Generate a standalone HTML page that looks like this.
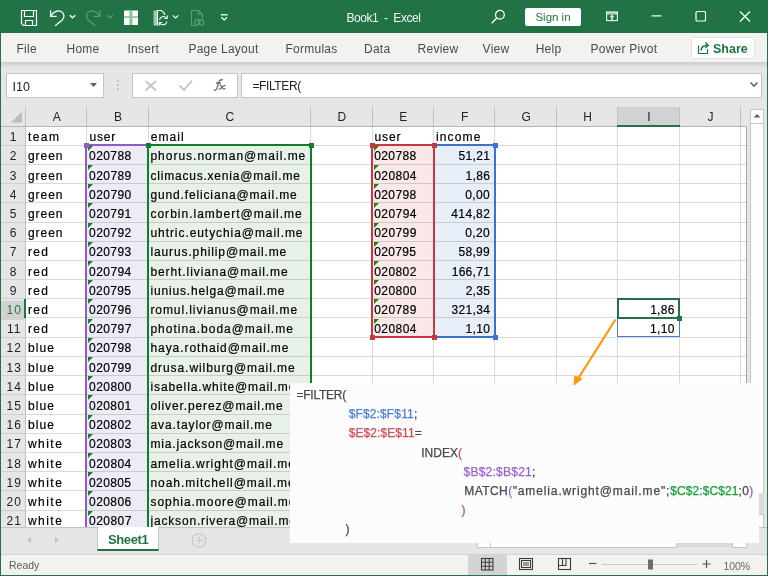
<!DOCTYPE html><html><head><meta charset="utf-8"><style>
*{margin:0;padding:0;box-sizing:border-box}
html,body{width:768px;height:576px;overflow:hidden;background:#fff}
body{position:relative;font-family:"Liberation Sans",sans-serif;color:#000}
.t{-webkit-text-stroke:0.2px #000}
.a{position:absolute}
.t{position:absolute;white-space:nowrap;font-size:12px;line-height:19.2px;height:19.2px}
.tx{letter-spacing:1.0px}
.hl{position:absolute;height:1px;background:#dadada}
.vl{position:absolute;width:1px;background:#dadada}
.tab{position:absolute;font-size:12px;color:#4a4a4a;letter-spacing:0.25px;line-height:20px;white-space:nowrap}
.ch{position:absolute;top:107px;height:19px;font-size:12px;line-height:20px;text-align:center;color:#222}
.rh{position:absolute;left:1px;width:24px;font-size:12px;line-height:19.2px;height:19.2px;text-align:center;color:#222}
.tri{position:absolute;width:0;height:0;border-top:5px solid #0d8a0d;border-right:5px solid transparent}
.rf{letter-spacing:0.2px}
.fl{-webkit-text-stroke:0.25px currentColor;position:absolute;font-size:12px;line-height:19.2px;white-space:nowrap;color:#484848;letter-spacing:0.72px}
</style></head><body>
<div class="a" style="left:0;top:0;width:768px;height:33px;background:#217346"></div>
<div class="a" style="left:0;top:0;width:1px;height:576px;background:#217346;z-index:50"></div>
<div class="a" style="left:767px;top:0;width:1px;height:576px;background:#217346;z-index:50"></div>
<div class="a" style="left:0;top:575px;width:768px;height:1px;background:#217346;z-index:50"></div>
<svg class="a" style="left:0;top:0" width="240" height="33" viewBox="0 0 240 33">
<g fill="none" stroke="#fff" stroke-width="1.2">
<path d="M21.5 10.5H36.5V25.5H23.5L21.5 23.5Z"/>
<path d="M24.5 10.5V16.5H33.5V10.5"/>
<path d="M25.5 25.5V20.5H32.5V25.5"/>
</g>
<g fill="none" stroke="#fff" stroke-width="1.3">
<path d="M50.6 10.3V16.4H56.6"/>
<path d="M51.2 15.8C53.5 11.5 58 9.8 61.2 11.5C64.5 13.3 64.8 17.5 62 20.2L55.2 25.8"/>
<path d="M69.8 15.2l2.7 2.6 2.7-2.6"/>
</g>
<g fill="none" stroke="#5d9b76" stroke-width="1.3">
<path d="M99.9 10.3V16.4H93.9"/>
<path d="M99.3 15.8C97 11.5 92.5 9.8 89.3 11.5C86 13.3 85.7 17.5 88.5 20.2L95.3 25.8"/>
<path d="M107.6 15.2l2.7 2.6 2.7-2.6"/>
</g>
<rect x="124" y="10.5" width="14" height="14.5" fill="#fff"/>
<rect x="129.3" y="10.5" width="3.2" height="14.5" fill="#8fc2a3"/>
<rect x="124" y="16.3" width="14" height="1.8" fill="#6aa985"/>
<path d="M124 17.2h14" stroke="#d8eadf" stroke-width="0.7"/>
<rect x="153.5" y="10.5" width="3.6" height="15" fill="#9fc9b0"/>
<g fill="none" stroke="#fff" stroke-width="1.1">
<path d="M157.5 25.5V10.5H161.5L164.5 13.5V15"/>
<path d="M159.5 19.8a4 4 0 0 1 7-1.8"/><path d="M167 21.5a4 4 0 0 1-7 1.8"/>
<path d="M167.2 15.5v3h-3M159.3 25.5v-3h3"/>
<path d="M172.8 15.4l2.8 2.6 2.8-2.6"/>
</g>
<g fill="none" stroke="#5d9c77" stroke-width="1.1">
<path d="M196.5 25.5H191.5V10.5H198.5L202.5 14.5V18.5"/><path d="M198.5 10.5V14.5H202.5"/>
<circle cx="197.3" cy="22.3" r="2.7"/><circle cx="201" cy="22.6" r="2.7"/>
</g>
<g fill="none" stroke="#fff" stroke-width="1.3">
<path d="M220.8 14.8h6.8"/><path d="M221.4 17.2l2.8 2.7 2.8-2.7"/>
</g>
</svg>
<div class="a" style="left:346.5px;top:9.6px;font-size:12px;line-height:16px;color:#f2f6f3;white-space:nowrap;letter-spacing:-0.45px">Book1&nbsp; -&nbsp; Excel</div>
<svg class="a" style="left:488px;top:8px" width="20" height="20" viewBox="0 0 20 20"><g fill="none" stroke="#fff" stroke-width="1.3"><circle cx="11.9" cy="6.8" r="4.4"/><path d="M8.8 10L3.7 15.3"/></g></svg>
<div class="a" style="left:525px;top:8px;width:56px;height:18px;background:#fff;border-radius:2px;color:#217346;font-size:11.5px;line-height:19px;text-align:center;letter-spacing:0px">Sign in</div>
<svg class="a" style="left:600px;top:6px" width="24" height="22" viewBox="0 0 24 22"><rect x="6.6" y="6" width="10.8" height="2.8" fill="#9cc6ad"/><g fill="none" stroke="#f0f6f2" stroke-width="1.1"><rect x="6.6" y="6" width="10.8" height="8.6"/></g><path d="M12 8.6L9.6 11.2H11.2V14.6H12.8V11.2H14.4Z" fill="#e6f0ea"/></svg>
<svg class="a" style="left:640px;top:0" width="128" height="33" viewBox="0 0 128 33"><g fill="none" stroke="#fff" stroke-width="1.2">
<path d="M11.5 15.9h10"/>
<rect x="56" y="11.5" width="9.5" height="9.5" rx="1"/>
<path d="M100 11.5l10 10M110 11.5l-10 10"/>
</g></svg>
<div class="a" style="left:1px;top:33px;width:766px;height:29px;background:#f3f2f1"></div>
<div class="tab" style="left:16.5px;top:39px">File</div>
<div class="tab" style="left:66.5px;top:39px">Home</div>
<div class="tab" style="left:127.5px;top:39px">Insert</div>
<div class="tab" style="left:188.4px;top:39px">Page Layout</div>
<div class="tab" style="left:285.5px;top:39px">Formulas</div>
<div class="tab" style="left:364px;top:39px">Data</div>
<div class="tab" style="left:417.6px;top:39px">Review</div>
<div class="tab" style="left:482.6px;top:39px">View</div>
<div class="tab" style="left:535.7px;top:39px">Help</div>
<div class="tab" style="left:590.5px;top:39px">Power Pivot</div>
<div class="a" style="left:691px;top:37px;width:64px;height:22px;background:#fff;border:1px solid #e3e3e3;border-radius:2px"></div>
<svg class="a" style="left:696px;top:40px" width="14" height="16" viewBox="0 0 14 16"><g fill="none" stroke="#217346" stroke-width="1.2"><path d="M2.5 5.5V13.5H11.5V9"/><path d="M5 10.5C5.3 7 7.8 5.2 11.5 5.2" stroke-width="1.6"/><path d="M9.3 2.5L12.3 5.2L9.3 7.9" stroke-width="1.5"/></g></svg>
<div class="a" style="left:713px;top:39px;font-size:12.5px;line-height:20px;color:#217346;font-weight:bold;white-space:nowrap">Share</div>
<div class="a" style="left:1px;top:62px;width:766px;height:45px;background:#e6e6e6"></div>
<div class="a" style="left:1px;top:62px;width:766px;height:6px;background:linear-gradient(#cbcbcb,#d6d6d6 40%,#e6e6e6)"></div>
<div class="a" style="left:6px;top:73px;width:98px;height:25px;background:#fff;border:1px solid #c6c6c6"></div>
<div class="a" style="left:12.5px;top:78.5px;font-size:12.5px;line-height:17px;color:#222">I10</div>
<svg class="a" style="left:90px;top:82.5px" width="7" height="4" viewBox="0 0 7 4"><path d="M0 0h7L3.5 4z" fill="#5f5f5f"/></svg>
<svg class="a" style="left:116px;top:80px" width="4" height="12" viewBox="0 0 4 12"><g fill="#a6a6a6"><rect x="1" y="0.5" width="1.5" height="1.5"/><rect x="1" y="4.5" width="1.5" height="1.5"/><rect x="1" y="8.5" width="1.5" height="1.5"/></g></svg>
<div class="a" style="left:132px;top:73px;width:106px;height:25px;background:#fff;border:1px solid #c6c6c6"></div>
<svg class="a" style="left:140px;top:76px" width="95" height="18" viewBox="0 0 95 18"><g fill="none" stroke="#c4c4c4" stroke-width="1.8" stroke-linecap="round"><path d="M6 5.5l9.5 8.5M15.5 5.5l-9.5 8.5"/><path d="M40 10l4 4 7.5-8.8"/></g></svg>
<svg class="a" style="left:205px;top:72px" width="30" height="24" viewBox="205 72 30 24"><g fill="none" stroke="#6a6a6a" stroke-width="1.3" stroke-linecap="round"><path d="M214.3 90.2C215.6 90.6 216.6 89.6 217.1 87.6L218.9 81.8C219.4 80.2 220.6 79.4 222.4 79.9"/><path d="M216.4 83H220.4"/><path d="M220 85.2C220.8 85 221.3 85.4 221.8 86.5L222.6 88.2C223 89 223.8 89.2 224.9 88.6"/><path d="M225 85.3C223.5 85.6 222.2 86.8 220.8 88.3C220.2 89 219.6 89.2 219.2 88.9"/></g></svg>
<div class="a" style="left:241px;top:73px;width:521px;height:25px;background:#fff;border:1px solid #c6c6c6"></div>
<div class="a" style="left:252.5px;top:77.5px;font-size:12px;line-height:17px;color:#222;letter-spacing:-0.4px">=FILTER(</div>
<svg class="a" style="left:749px;top:81px" width="10" height="8" viewBox="0 0 10 8"><path d="M1.5 1.5l3.5 3.5 3.5-3.5" fill="none" stroke="#666" stroke-width="1.6"/></svg>
<div class="a" style="left:1px;top:107px;width:746px;height:19px;background:#e6e6e6"></div>
<div class="a" style="left:617.78px;top:107px;width:60.940000000000055px;height:19px;background:#d2d2d2"></div>
<div class="a" style="left:617.28px;top:125px;width:62.440000000000055px;height:2px;background:#217346;z-index:3"></div>
<svg class="a" style="left:0;top:107px" width="25" height="19" viewBox="0 0 25 19"><path d="M11 15.5L22 4.5V15.5z" fill="#bdbdbd"/></svg>
<div class="ch" style="left:25.96px;width:61.440000000000005px">A</div>
<div class="ch" style="left:87.4px;width:61.44px">B</div>
<div class="ch" style="left:148.84px;width:162.23999999999998px">C</div>
<div class="ch" style="left:311.08px;width:61.44px">D</div>
<div class="ch" style="left:372.52px;width:61.44px">E</div>
<div class="ch" style="left:433.96px;width:61.44px">F</div>
<div class="ch" style="left:495.4px;width:61.440000000000055px">G</div>
<div class="ch" style="left:556.84px;width:61.43999999999994px">H</div>
<div class="ch" style="left:618.28px;width:61.440000000000055px">I</div>
<div class="ch" style="left:679.72px;width:61.43999999999994px">J</div>
<div class="a" style="left:24.96px;top:107px;width:1px;height:19px;background:#bfbfbf"></div>
<div class="a" style="left:86.4px;top:107px;width:1px;height:19px;background:#bfbfbf"></div>
<div class="a" style="left:147.84px;top:107px;width:1px;height:19px;background:#bfbfbf"></div>
<div class="a" style="left:310.08px;top:107px;width:1px;height:19px;background:#bfbfbf"></div>
<div class="a" style="left:371.52px;top:107px;width:1px;height:19px;background:#bfbfbf"></div>
<div class="a" style="left:432.96px;top:107px;width:1px;height:19px;background:#bfbfbf"></div>
<div class="a" style="left:494.4px;top:107px;width:1px;height:19px;background:#bfbfbf"></div>
<div class="a" style="left:555.84px;top:107px;width:1px;height:19px;background:#bfbfbf"></div>
<div class="a" style="left:617.28px;top:107px;width:1px;height:19px;background:#bfbfbf"></div>
<div class="a" style="left:678.72px;top:107px;width:1px;height:19px;background:#bfbfbf"></div>
<div class="a" style="left:740.16px;top:107px;width:1px;height:19px;background:#bfbfbf"></div>
<div class="a" style="left:1px;top:125.5px;width:746px;height:1px;background:#b5b5b5;z-index:2"></div>
<div class="a" style="left:1px;top:126px;width:24px;height:401px;background:#e6e6e6"></div>
<div class="a" style="left:25px;top:126px;width:1px;height:401px;background:#bfbfbf"></div>
<div class="rh" style="top:128.2px;color:#222;letter-spacing:0.0px;padding-left:0.0px">1</div>
<div class="a" style="left:1px;top:145px;width:24px;height:1px;background:#cfcfcf"></div>
<div class="rh" style="top:147.39999999999998px;color:#222;letter-spacing:0.0px;padding-left:0.0px">2</div>
<div class="a" style="left:1px;top:164px;width:24px;height:1px;background:#cfcfcf"></div>
<div class="rh" style="top:166.6px;color:#222;letter-spacing:0.0px;padding-left:0.0px">3</div>
<div class="a" style="left:1px;top:183px;width:24px;height:1px;background:#cfcfcf"></div>
<div class="rh" style="top:185.79999999999998px;color:#222;letter-spacing:0.0px;padding-left:0.0px">4</div>
<div class="a" style="left:1px;top:202px;width:24px;height:1px;background:#cfcfcf"></div>
<div class="rh" style="top:205.0px;color:#222;letter-spacing:0.0px;padding-left:0.0px">5</div>
<div class="a" style="left:1px;top:222px;width:24px;height:1px;background:#cfcfcf"></div>
<div class="rh" style="top:224.2px;color:#222;letter-spacing:0.0px;padding-left:0.0px">6</div>
<div class="a" style="left:1px;top:241px;width:24px;height:1px;background:#cfcfcf"></div>
<div class="rh" style="top:243.39999999999998px;color:#222;letter-spacing:0.0px;padding-left:0.0px">7</div>
<div class="a" style="left:1px;top:260px;width:24px;height:1px;background:#cfcfcf"></div>
<div class="rh" style="top:262.59999999999997px;color:#222;letter-spacing:0.0px;padding-left:0.0px">8</div>
<div class="a" style="left:1px;top:279px;width:24px;height:1px;background:#cfcfcf"></div>
<div class="rh" style="top:281.8px;color:#222;letter-spacing:0.0px;padding-left:0.0px">9</div>
<div class="a" style="left:1px;top:298px;width:24px;height:1px;background:#cfcfcf"></div>
<div class="rh" style="top:300.99999999999994px;background:#d2d2d2;color:#217346;letter-spacing:0.9px;padding-left:2.4px">10</div>
<div class="a" style="left:1px;top:317px;width:24px;height:1px;background:#cfcfcf"></div>
<div class="rh" style="top:320.2px;color:#222;letter-spacing:0.9px;padding-left:2.4px">11</div>
<div class="a" style="left:1px;top:337px;width:24px;height:1px;background:#cfcfcf"></div>
<div class="rh" style="top:339.4px;color:#222;letter-spacing:0.9px;padding-left:2.4px">12</div>
<div class="a" style="left:1px;top:356px;width:24px;height:1px;background:#cfcfcf"></div>
<div class="rh" style="top:358.59999999999997px;color:#222;letter-spacing:0.9px;padding-left:2.4px">13</div>
<div class="a" style="left:1px;top:375px;width:24px;height:1px;background:#cfcfcf"></div>
<div class="rh" style="top:377.8px;color:#222;letter-spacing:0.9px;padding-left:2.4px">14</div>
<div class="a" style="left:1px;top:394px;width:24px;height:1px;background:#cfcfcf"></div>
<div class="rh" style="top:397.0px;color:#222;letter-spacing:0.9px;padding-left:2.4px">15</div>
<div class="a" style="left:1px;top:414px;width:24px;height:1px;background:#cfcfcf"></div>
<div class="rh" style="top:416.2px;color:#222;letter-spacing:0.9px;padding-left:2.4px">16</div>
<div class="a" style="left:1px;top:433px;width:24px;height:1px;background:#cfcfcf"></div>
<div class="rh" style="top:435.4px;color:#222;letter-spacing:0.9px;padding-left:2.4px">17</div>
<div class="a" style="left:1px;top:452px;width:24px;height:1px;background:#cfcfcf"></div>
<div class="rh" style="top:454.59999999999997px;color:#222;letter-spacing:0.9px;padding-left:2.4px">18</div>
<div class="a" style="left:1px;top:471px;width:24px;height:1px;background:#cfcfcf"></div>
<div class="rh" style="top:473.79999999999995px;color:#222;letter-spacing:0.9px;padding-left:2.4px">19</div>
<div class="a" style="left:1px;top:490px;width:24px;height:1px;background:#cfcfcf"></div>
<div class="rh" style="top:493.0px;color:#222;letter-spacing:0.9px;padding-left:2.4px">20</div>
<div class="a" style="left:1px;top:510px;width:24px;height:1px;background:#cfcfcf"></div>
<div class="rh" style="top:512.2px;color:#222;letter-spacing:0.9px;padding-left:2.4px">21</div>
<div class="a" style="left:1px;top:529px;width:24px;height:1px;background:#cfcfcf"></div>
<div class="a" style="left:24px;top:298.79999999999995px;width:2px;height:19.5px;background:#217346;z-index:3"></div>
<div class="a" style="left:26px;top:126px;width:720px;height:401px;background:#fff"></div>
<div class="hl" style="left:26px;top:145px;width:720px"></div>
<div class="hl" style="left:26px;top:164px;width:720px"></div>
<div class="hl" style="left:26px;top:183px;width:720px"></div>
<div class="hl" style="left:26px;top:202px;width:720px"></div>
<div class="hl" style="left:26px;top:222px;width:720px"></div>
<div class="hl" style="left:26px;top:241px;width:720px"></div>
<div class="hl" style="left:26px;top:260px;width:720px"></div>
<div class="hl" style="left:26px;top:279px;width:720px"></div>
<div class="hl" style="left:26px;top:298px;width:720px"></div>
<div class="hl" style="left:26px;top:317px;width:720px"></div>
<div class="hl" style="left:26px;top:337px;width:720px"></div>
<div class="hl" style="left:26px;top:356px;width:720px"></div>
<div class="hl" style="left:26px;top:375px;width:720px"></div>
<div class="hl" style="left:26px;top:394px;width:720px"></div>
<div class="hl" style="left:26px;top:414px;width:720px"></div>
<div class="hl" style="left:26px;top:433px;width:720px"></div>
<div class="hl" style="left:26px;top:452px;width:720px"></div>
<div class="hl" style="left:26px;top:471px;width:720px"></div>
<div class="hl" style="left:26px;top:490px;width:720px"></div>
<div class="hl" style="left:26px;top:510px;width:720px"></div>
<div class="vl" style="left:86.4px;top:126px;height:401px"></div>
<div class="vl" style="left:147.84px;top:126px;height:401px"></div>
<div class="vl" style="left:310.08px;top:126px;height:401px"></div>
<div class="vl" style="left:371.52px;top:126px;height:401px"></div>
<div class="vl" style="left:432.96px;top:126px;height:401px"></div>
<div class="vl" style="left:494.4px;top:126px;height:401px"></div>
<div class="vl" style="left:555.84px;top:126px;height:401px"></div>
<div class="vl" style="left:617.28px;top:126px;height:401px"></div>
<div class="vl" style="left:678.72px;top:126px;height:401px"></div>
<div class="vl" style="left:740.16px;top:126px;height:401px"></div>
<div class="a" style="left:86.4px;top:145.2px;width:61.44px;height:381.8px;background:#efebf6;mix-blend-mode:multiply"></div>
<div class="a" style="left:147.84px;top:145.2px;width:162.23999999999998px;height:381.8px;background:#e8f1e8;mix-blend-mode:multiply"></div>
<div class="a" style="left:371.52px;top:145.2px;width:61.44px;height:192.0px;background:#f8e8e8;mix-blend-mode:multiply"></div>
<div class="a" style="left:432.96px;top:145.2px;width:61.44px;height:192.0px;background:#e8eef8;mix-blend-mode:multiply"></div>
<div class="a" style="left:746px;top:126px;width:1px;height:401px;background:#a8a8a8"></div>
<div class="a" style="left:747px;top:107px;width:20px;height:420px;background:#e6e6e6"></div>
<div class="t" style="left:27.96px;top:128.20px;letter-spacing:1.445px">team</div>
<div class="t" style="left:89.40px;top:128.20px;letter-spacing:0.843px">user</div>
<div class="t" style="left:150.84px;top:128.20px;letter-spacing:1.025px">email</div>
<div class="t" style="left:374.52px;top:128.20px;letter-spacing:0.843px">user</div>
<div class="t" style="left:435.96px;top:128.20px;letter-spacing:1.149px">income</div>
<div class="t" style="left:27.96px;top:147.40px;letter-spacing:0.964px">green</div>
<div class="t" style="left:89.10px;top:147.40px;letter-spacing:0.401px">020788</div>
<div class="tri" style="left:88.4px;top:145.79999999999998px"></div>
<div class="t" style="left:150.44px;top:147.40px;letter-spacing:0.998px">phorus.norman@mail.me</div>
<div class="t" style="left:27.96px;top:166.60px;letter-spacing:0.964px">green</div>
<div class="t" style="left:89.10px;top:166.60px;letter-spacing:0.426px">020789</div>
<div class="tri" style="left:88.4px;top:165.0px"></div>
<div class="t" style="left:150.44px;top:166.60px;letter-spacing:0.788px">climacus.xenia@mail.me</div>
<div class="t" style="left:27.96px;top:185.80px;letter-spacing:0.964px">green</div>
<div class="t" style="left:89.10px;top:185.80px;letter-spacing:0.429px">020790</div>
<div class="tri" style="left:88.4px;top:184.2px"></div>
<div class="t" style="left:150.44px;top:185.80px;letter-spacing:0.856px">gund.feliciana@mail.me</div>
<div class="t" style="left:27.96px;top:205.00px;letter-spacing:0.964px">green</div>
<div class="t" style="left:89.10px;top:205.00px;letter-spacing:0.400px">020791</div>
<div class="tri" style="left:88.4px;top:203.4px"></div>
<div class="t" style="left:150.44px;top:205.00px;letter-spacing:1.006px">corbin.lambert@mail.me</div>
<div class="t" style="left:27.96px;top:224.20px;letter-spacing:0.964px">green</div>
<div class="t" style="left:89.10px;top:224.20px;letter-spacing:0.410px">020792</div>
<div class="tri" style="left:88.4px;top:222.6px"></div>
<div class="t" style="left:150.44px;top:224.20px;letter-spacing:0.934px">uhtric.eutychia@mail.me</div>
<div class="t" style="left:27.96px;top:243.40px;letter-spacing:1.269px">red</div>
<div class="t" style="left:89.10px;top:243.40px;letter-spacing:0.407px">020793</div>
<div class="tri" style="left:88.4px;top:241.79999999999998px"></div>
<div class="t" style="left:150.44px;top:243.40px;letter-spacing:0.881px">laurus.philip@mail.me</div>
<div class="t" style="left:27.96px;top:262.60px;letter-spacing:1.269px">red</div>
<div class="t" style="left:89.10px;top:262.60px;letter-spacing:0.431px">020794</div>
<div class="tri" style="left:88.4px;top:261.0px"></div>
<div class="t" style="left:150.44px;top:262.60px;letter-spacing:0.915px">berht.liviana@mail.me</div>
<div class="t" style="left:27.96px;top:281.80px;letter-spacing:1.269px">red</div>
<div class="t" style="left:89.10px;top:281.80px;letter-spacing:0.345px">020795</div>
<div class="tri" style="left:88.4px;top:280.20000000000005px"></div>
<div class="t" style="left:150.44px;top:281.80px;letter-spacing:0.835px">iunius.helga@mail.me</div>
<div class="t" style="left:27.96px;top:301.00px;letter-spacing:1.269px">red</div>
<div class="t" style="left:89.10px;top:301.00px;letter-spacing:0.417px">020796</div>
<div class="tri" style="left:88.4px;top:299.4px"></div>
<div class="t" style="left:150.44px;top:301.00px;letter-spacing:0.912px">romul.livianus@mail.me</div>
<div class="t" style="left:27.96px;top:320.20px;letter-spacing:1.269px">red</div>
<div class="t" style="left:89.10px;top:320.20px;letter-spacing:0.439px">020797</div>
<div class="tri" style="left:88.4px;top:318.6px"></div>
<div class="t" style="left:150.44px;top:320.20px;letter-spacing:0.989px">photina.boda@mail.me</div>
<div class="t" style="left:27.96px;top:339.40px;letter-spacing:1.119px">blue</div>
<div class="t" style="left:89.10px;top:339.40px;letter-spacing:0.401px">020798</div>
<div class="tri" style="left:88.4px;top:337.8px"></div>
<div class="t" style="left:150.44px;top:339.40px;letter-spacing:0.935px">haya.rothaid@mail.me</div>
<div class="t" style="left:27.96px;top:358.60px;letter-spacing:1.119px">blue</div>
<div class="t" style="left:89.10px;top:358.60px;letter-spacing:0.426px">020799</div>
<div class="tri" style="left:88.4px;top:357.0px"></div>
<div class="t" style="left:150.44px;top:358.60px;letter-spacing:0.932px">drusa.wilburg@mail.me</div>
<div class="t" style="left:27.96px;top:377.80px;letter-spacing:1.119px">blue</div>
<div class="t" style="left:89.10px;top:377.80px;letter-spacing:0.429px">020800</div>
<div class="tri" style="left:88.4px;top:376.20000000000005px"></div>
<div class="t" style="left:150.44px;top:377.80px;letter-spacing:0.893px">isabella.white@mail.me</div>
<div class="t" style="left:27.96px;top:397.00px;letter-spacing:1.119px">blue</div>
<div class="t" style="left:89.10px;top:397.00px;letter-spacing:0.400px">020801</div>
<div class="tri" style="left:88.4px;top:395.40000000000003px"></div>
<div class="t" style="left:150.44px;top:397.00px;letter-spacing:0.877px">oliver.perez@mail.me</div>
<div class="t" style="left:27.96px;top:416.20px;letter-spacing:1.119px">blue</div>
<div class="t" style="left:89.10px;top:416.20px;letter-spacing:0.410px">020802</div>
<div class="tri" style="left:88.4px;top:414.6px"></div>
<div class="t" style="left:150.44px;top:416.20px;letter-spacing:0.897px">ava.taylor@mail.me</div>
<div class="t" style="left:27.96px;top:435.40px;letter-spacing:1.472px">white</div>
<div class="t" style="left:89.10px;top:435.40px;letter-spacing:0.407px">020803</div>
<div class="tri" style="left:88.4px;top:433.8px"></div>
<div class="t" style="left:150.44px;top:435.40px;letter-spacing:0.838px">mia.jackson@mail.me</div>
<div class="t" style="left:27.96px;top:454.60px;letter-spacing:1.472px">white</div>
<div class="t" style="left:89.10px;top:454.60px;letter-spacing:0.431px">020804</div>
<div class="tri" style="left:88.4px;top:453.0px"></div>
<div class="t" style="left:150.44px;top:454.60px;letter-spacing:0.980px">amelia.wright@mail.me</div>
<div class="t" style="left:27.96px;top:473.80px;letter-spacing:1.472px">white</div>
<div class="t" style="left:89.10px;top:473.80px;letter-spacing:0.345px">020805</div>
<div class="tri" style="left:88.4px;top:472.2px"></div>
<div class="t" style="left:150.44px;top:473.80px;letter-spacing:0.965px">noah.mitchell@mail.me</div>
<div class="t" style="left:27.96px;top:493.00px;letter-spacing:1.472px">white</div>
<div class="t" style="left:89.10px;top:493.00px;letter-spacing:0.417px">020806</div>
<div class="tri" style="left:88.4px;top:491.40000000000003px"></div>
<div class="t" style="left:150.44px;top:493.00px;letter-spacing:0.953px">sophia.moore@mail.me</div>
<div class="t" style="left:27.96px;top:512.20px;letter-spacing:1.472px">white</div>
<div class="t" style="left:89.10px;top:512.20px;letter-spacing:0.439px">020807</div>
<div class="tri" style="left:88.4px;top:510.6px"></div>
<div class="t" style="left:150.44px;top:512.20px;letter-spacing:0.825px">jackson.rivera@mail.me</div>
<div class="t" style="left:374.22px;top:147.40px;letter-spacing:0.401px">020788</div>
<div class="tri" style="left:373.52px;top:145.79999999999998px"></div>
<div class="t" style="right:277.90px;top:147.40px;letter-spacing:0.303px">51,21</div>
<div class="t" style="left:374.22px;top:166.60px;letter-spacing:0.431px">020804</div>
<div class="tri" style="left:373.52px;top:165.0px"></div>
<div class="t" style="right:277.92px;top:166.60px;letter-spacing:0.280px">1,86</div>
<div class="t" style="left:374.22px;top:185.80px;letter-spacing:0.401px">020798</div>
<div class="tri" style="left:373.52px;top:184.2px"></div>
<div class="t" style="right:277.77px;top:185.80px;letter-spacing:0.431px">0,00</div>
<div class="t" style="left:374.22px;top:205.00px;letter-spacing:0.431px">020794</div>
<div class="tri" style="left:373.52px;top:203.4px"></div>
<div class="t" style="right:277.85px;top:205.00px;letter-spacing:0.354px">414,82</div>
<div class="t" style="left:374.22px;top:224.20px;letter-spacing:0.426px">020799</div>
<div class="tri" style="left:373.52px;top:222.6px"></div>
<div class="t" style="right:277.77px;top:224.20px;letter-spacing:0.431px">0,20</div>
<div class="t" style="left:374.22px;top:243.40px;letter-spacing:0.345px">020795</div>
<div class="tri" style="left:373.52px;top:241.79999999999998px"></div>
<div class="t" style="right:277.86px;top:243.40px;letter-spacing:0.335px">58,99</div>
<div class="t" style="left:374.22px;top:262.60px;letter-spacing:0.410px">020802</div>
<div class="tri" style="left:373.52px;top:261.0px"></div>
<div class="t" style="right:277.92px;top:262.60px;letter-spacing:0.280px">166,71</div>
<div class="t" style="left:374.22px;top:281.80px;letter-spacing:0.429px">020800</div>
<div class="tri" style="left:373.52px;top:280.20000000000005px"></div>
<div class="t" style="right:277.95px;top:281.80px;letter-spacing:0.248px">2,35</div>
<div class="t" style="left:374.22px;top:301.00px;letter-spacing:0.426px">020789</div>
<div class="tri" style="left:373.52px;top:299.4px"></div>
<div class="t" style="right:277.87px;top:301.00px;letter-spacing:0.330px">321,34</div>
<div class="t" style="left:374.22px;top:320.20px;letter-spacing:0.431px">020804</div>
<div class="tri" style="left:373.52px;top:318.6px"></div>
<div class="t" style="right:277.90px;top:320.20px;letter-spacing:0.301px">1,10</div>
<div class="t" style="right:93.40px;top:301.00px;letter-spacing:0.280px">1,86</div>
<div class="t" style="right:93.38px;top:320.20px;letter-spacing:0.301px">1,10</div>
<div class="a" style="left:85px;top:144px;width:64px;height:2px;background:#8a5cc4;z-index:4"></div>
<div class="a" style="left:85px;top:144px;width:2px;height:383px;background:#8a5cc4;z-index:4"></div>
<div class="a" style="left:147px;top:144px;width:2px;height:383px;background:#8a5cc4;z-index:4"></div>
<div class="a" style="left:84px;top:143px;width:5px;height:5px;background:#8a5cc4;z-index:5"></div>
<div class="a" style="left:146px;top:143px;width:5px;height:5px;background:#8a5cc4;z-index:5"></div>
<div class="a" style="left:147px;top:144px;width:165px;height:2px;background:#0f7f2b;z-index:4"></div>
<div class="a" style="left:147px;top:144px;width:2px;height:383px;background:#0f7f2b;z-index:4"></div>
<div class="a" style="left:310px;top:144px;width:2px;height:383px;background:#0f7f2b;z-index:4"></div>
<div class="a" style="left:146px;top:143px;width:5px;height:5px;background:#0f7f2b;z-index:5"></div>
<div class="a" style="left:309px;top:143px;width:5px;height:5px;background:#0f7f2b;z-index:5"></div>
<div class="a" style="left:433px;top:144px;width:63px;height:2px;background:#3a72cc;z-index:4"></div>
<div class="a" style="left:433px;top:144px;width:2px;height:192px;background:#3a72cc;z-index:4"></div>
<div class="a" style="left:494px;top:144px;width:2px;height:192px;background:#3a72cc;z-index:4"></div>
<div class="a" style="left:433px;top:336px;width:63px;height:2px;background:#3a72cc;z-index:4"></div>
<div class="a" style="left:432px;top:143px;width:5px;height:5px;background:#3a72cc;z-index:5"></div>
<div class="a" style="left:493px;top:143px;width:5px;height:5px;background:#3a72cc;z-index:5"></div>
<div class="a" style="left:432px;top:335px;width:5px;height:5px;background:#3a72cc;z-index:5"></div>
<div class="a" style="left:493px;top:335px;width:5px;height:5px;background:#3a72cc;z-index:5"></div>
<div class="a" style="left:371px;top:144px;width:64px;height:2px;background:#c8363f;z-index:4"></div>
<div class="a" style="left:371px;top:144px;width:2px;height:192px;background:#c8363f;z-index:4"></div>
<div class="a" style="left:433px;top:144px;width:2px;height:192px;background:#c8363f;z-index:4"></div>
<div class="a" style="left:371px;top:336px;width:64px;height:2px;background:#c8363f;z-index:4"></div>
<div class="a" style="left:370px;top:143px;width:5px;height:5px;background:#c8363f;z-index:5"></div>
<div class="a" style="left:432px;top:143px;width:5px;height:5px;background:#c8363f;z-index:5"></div>
<div class="a" style="left:370px;top:335px;width:5px;height:5px;background:#c8363f;z-index:5"></div>
<div class="a" style="left:432px;top:335px;width:5px;height:5px;background:#c8363f;z-index:5"></div>
<div class="a" style="left:617.28px;top:317.5px;width:62.440000000000055px;height:19.7px;border:1px solid #4a7bd0;z-index:4"></div>
<div class="a" style="left:616.78px;top:297.79999999999995px;width:63.440000000000055px;height:21.2px;border:2px solid #217346;z-index:5"></div>
<div class="a" style="left:677px;top:316px;width:5px;height:5px;background:#217346;z-index:6"></div>
<svg class="a" style="left:0;top:0;z-index:20" width="768" height="576" viewBox="0 0 768 576"><g stroke="#fa9a12" fill="#fa9a12"><path d="M615.5 319.5L578.5 378" stroke-width="2.3" fill="none"/><path d="M574 385l0.8-9 7.2 2.8z" stroke-width="1"/></g></svg>
<div class="a" style="left:1px;top:527px;width:766px;height:28px;background:#e6e6e6"></div>
<div class="a" style="left:1px;top:527px;width:766px;height:1px;background:#c4c4c4"></div>
<div class="a" style="left:1px;top:554px;width:766px;height:1px;background:#d2d2d2"></div>
<svg class="a" style="left:20px;top:532px" width="50" height="16" viewBox="0 0 50 16"><g fill="#c0c0c0"><path d="M11 5l-4 3 4 3z"/><path d="M35 5l4 3-4 3z"/></g></svg>
<div class="a" style="left:97px;top:527px;width:62px;height:24px;background:#fff;border-left:1px solid #c4c4c4;border-right:1px solid #c4c4c4;border-bottom:2px solid #217346"></div>
<div class="a" style="left:108px;top:531px;font-size:13px;line-height:18px;font-weight:bold;letter-spacing:-0.4px;color:#217346;white-space:nowrap">Sheet1</div>
<svg class="a" style="left:190px;top:532px" width="18" height="18" viewBox="0 0 18 18"><g fill="none" stroke="#c3c3c3" stroke-width="1.1"><circle cx="9" cy="8.5" r="6.8"/><path d="M9 4.5v8M5 8.5h8"/></g></svg>
<div class="a" style="left:1px;top:555px;width:766px;height:20px;background:#f3f2f1"></div>
<div class="a" style="left:9px;top:557px;font-size:10.5px;line-height:16px;color:#5b5b5b;letter-spacing:0px">Ready</div>
<div class="a" style="left:468px;top:555px;width:39px;height:20px;background:#d4d4d4"></div>
<svg class="a" style="left:460px;top:555px" width="308" height="20" viewBox="0 0 308 20"><g fill="none" stroke="#3c3c3c" stroke-width="1.1">
<rect x="21.5" y="3.5" width="11.5" height="11.5"/><path d="M21.5 7.3h11.5M21.5 11.2h11.5M25.3 3.5v11.5M29.2 3.5v11.5"/>
<rect x="59.5" y="3.5" width="13" height="11"/><rect x="61.5" y="5.5" width="9" height="7"/>
<rect x="98.5" y="3.5" width="12" height="11"/><path d="M98.5 10.5h7.5v-7M102.5 3.5v7"/>
</g>
<rect x="63" y="7" width="6" height="4" fill="#9a9a9a"/>
<path d="M129 8.5h7.5" stroke="#555" stroke-width="1.2"/>
<path d="M142 9.5h95.5" stroke="#c8c8c8" stroke-width="1"/>
<rect x="188" y="4.5" width="5" height="10" fill="#6d6d6d"/>
<path d="M242.5 9h8M246.5 5v8" stroke="#555" stroke-width="1.2"/>
</svg>
<div class="a" style="left:723.5px;top:557.5px;font-size:10.5px;line-height:16px;color:#666;letter-spacing:-0.1px">100%</div>
<div class="a" style="left:750px;top:109px;width:14px;height:15px;background:#fff;border:1px solid #c6c6c6"></div>
<svg class="a" style="left:750px;top:109px" width="14" height="15" viewBox="0 0 14 15"><path d="M3.5 8.5h7l-3.5-3.5z" fill="#5f5f5f"/></svg>
<div class="a" style="left:750px;top:124px;width:14px;height:370px;background:#fff;border:1px solid #c6c6c6;border-top:none"></div>
<div class="a" style="left:750px;top:493px;width:14px;height:21px;background:#dadada"></div>
<div class="a" style="left:750px;top:514px;width:14px;height:14px;background:#fff;border:1px solid #c6c6c6"></div>
<div class="a" style="left:477px;top:527px;width:14px;height:21px;background:#fff;border:1px solid #c6c6c6"></div>
<div class="a" style="left:490px;top:527px;width:187px;height:21px;background:#fff;border:1px solid #c6c6c6"></div>
<div class="a" style="left:677px;top:528px;width:55px;height:19px;background:#dadada"></div>
<div class="a" style="left:732px;top:527px;width:15px;height:21px;background:#fff;border:1px solid #c6c6c6"></div>
<div class="a" style="left:290px;top:383px;width:469px;height:160px;background:#fcfcfc;z-index:10"></div>
<div class="fl" style="left:296.5px;top:386.0px;z-index:11"><span style="letter-spacing:-0.243px">=FILTER(</span></div>
<div class="fl" style="left:348.7px;top:405.2px;z-index:11"><span style="letter-spacing:0.136px;color:#4a7fd6">$F$2:$F$11</span><span style="letter-spacing:0.359px">;</span></div>
<div class="fl" style="left:348.7px;top:424.4px;z-index:11"><span style="letter-spacing:0.085px;color:#d04b55">$E$2:$E$11</span><span style="letter-spacing:0.264px">=</span></div>
<div class="fl" style="left:421.2px;top:443.6px;z-index:11"><span style="letter-spacing:0.024px">INDEX</span><span style="letter-spacing:0.431px;color:#d04b55">(</span></div>
<div class="fl" style="left:463.5px;top:462.8px;z-index:11"><span style="letter-spacing:0.248px;color:#9a62d0">$B$2:$B$21</span><span style="letter-spacing:0.359px">;</span></div>
<div class="fl" style="left:464.2px;top:482.0px;z-index:11"><span style="letter-spacing:0.453px">MATCH</span><span style="letter-spacing:0.431px;color:#9a62d0">(</span><span style="letter-spacing:0.871px">"amelia.wright@mail.me";</span><span style="letter-spacing:0.084px;color:#18a03c">$C$2:$C$21</span><span style="letter-spacing:0.340px">;0</span><span style="letter-spacing:0.431px;color:#9a62d0">)</span></div>
<div class="fl" style="left:461.5px;top:501.2px;z-index:11"><span style="letter-spacing:0.431px;color:#d04b55">)</span></div>
<div class="fl" style="left:345.5px;top:520.4px;z-index:11"><span style="letter-spacing:0.431px">)</span></div>
</body></html>
